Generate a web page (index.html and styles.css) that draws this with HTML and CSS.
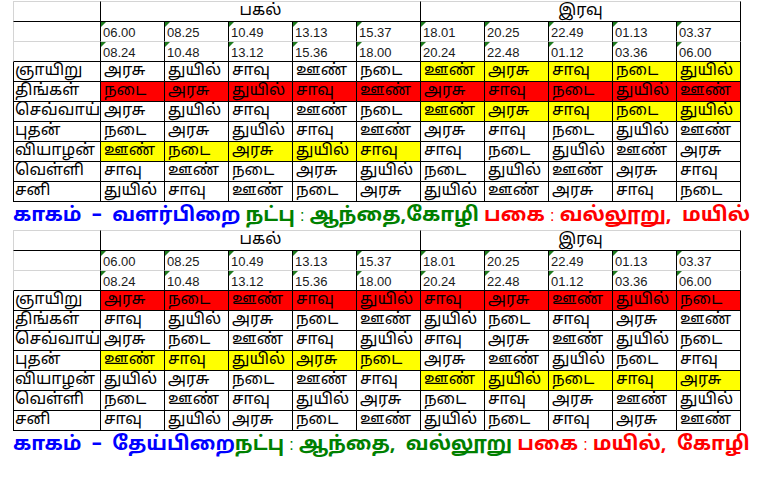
FILE: index.html
```html
<!DOCTYPE html>
<html lang="ta">
<head>
<meta charset="utf-8">
<link rel="stylesheet" href="styles.css">
</head>
<body>
<div class="sheet">
  <div class="grid">
    <div class="c h0 first"></div>
    <div class="c h0 span5 center">பகல்</div>
    <div class="c h0 span5 center">இரவு</div>

    <div class="c t1 first"></div>
    <div class="c t1 tm">06.00</div><div class="c t1 tm">08.25</div><div class="c t1 tm">10.49</div><div class="c t1 tm">13.13</div><div class="c t1 tm">15.37</div>
    <div class="c t1 tm">18.01</div><div class="c t1 tm">20.25</div><div class="c t1 tm">22.49</div><div class="c t1 tm">01.13</div><div class="c t1 tm">03.37</div>
    <div class="c t2 first"></div>
    <div class="c t2 tm">08.24</div><div class="c t2 tm">10.48</div><div class="c t2 tm">13.12</div><div class="c t2 tm">15.36</div><div class="c t2 tm">18.00</div>
    <div class="c t2 tm">20.24</div><div class="c t2 tm">22.48</div><div class="c t2 tm">01.12</div><div class="c t2 tm">03.36</div><div class="c t2 tm">06.00</div>

    <div class="c d first">ஞாயிறு</div>
    <div class="c d">அரசு</div><div class="c d">துயில்</div><div class="c d">சாவு</div><div class="c d">ஊண்</div><div class="c d">நடை</div>
    <div class="c d y">ஊண்</div><div class="c d y">அரசு</div><div class="c d y">சாவு</div><div class="c d y">நடை</div><div class="c d y">துயில்</div>

    <div class="c d first">திங்கள்</div>
    <div class="c d r">நடை</div><div class="c d r">அரசு</div><div class="c d r">துயில்</div><div class="c d r">சாவு</div><div class="c d r">ஊண்</div>
    <div class="c d r">அரசு</div><div class="c d r">சாவு</div><div class="c d r">நடை</div><div class="c d r">துயில்</div><div class="c d r">ஊண்</div>

    <div class="c d first">செவ்வாய்</div>
    <div class="c d">அரசு</div><div class="c d">துயில்</div><div class="c d">சாவு</div><div class="c d">ஊண்</div><div class="c d">நடை</div>
    <div class="c d y">ஊண்</div><div class="c d y">அரசு</div><div class="c d y">சாவு</div><div class="c d y">நடை</div><div class="c d y">துயில்</div>

    <div class="c d first">புதன்</div>
    <div class="c d">நடை</div><div class="c d">அரசு</div><div class="c d">துயில்</div><div class="c d">சாவு</div><div class="c d">ஊண்</div>
    <div class="c d">அரசு</div><div class="c d">சாவு</div><div class="c d">நடை</div><div class="c d">துயில்</div><div class="c d">ஊண்</div>

    <div class="c d first">வியாழன்</div>
    <div class="c d y">ஊண்</div><div class="c d y">நடை</div><div class="c d y">அரசு</div><div class="c d y">துயில்</div><div class="c d y">சாவு</div>
    <div class="c d">சாவு</div><div class="c d">நடை</div><div class="c d">துயில்</div><div class="c d">ஊண்</div><div class="c d">அரசு</div>

    <div class="c d first">வெள்ளி</div>
    <div class="c d">சாவு</div><div class="c d">ஊண்</div><div class="c d">நடை</div><div class="c d">அரசு</div><div class="c d">துயில்</div>
    <div class="c d">நடை</div><div class="c d">துயில்</div><div class="c d">ஊண்</div><div class="c d">அரசு</div><div class="c d">சாவு</div>

    <div class="c d first">சனி</div>
    <div class="c d">துயில்</div><div class="c d">சாவு</div><div class="c d">ஊண்</div><div class="c d">நடை</div><div class="c d">அரசு</div>
    <div class="c d">துயில்</div><div class="c d">ஊண்</div><div class="c d">அரசு</div><div class="c d">சாவு</div><div class="c d">நடை</div>
  </div>

  <div class="title"><span class="blue">காகம்  –  வளர்பிறை </span><span class="green">நட்பு <span class="colon">:</span> ஆந்தை,கோழி</span><span class="red"> பகை <span class="colon">:</span> வல்லூறு,  மயில்</span></div>

  <div class="grid">
    <div class="c h0 first"></div>
    <div class="c h0 span5 center">பகல்</div>
    <div class="c h0 span5 center">இரவு</div>

    <div class="c t1 first"></div>
    <div class="c t1 tm">06.00</div><div class="c t1 tm">08.25</div><div class="c t1 tm">10.49</div><div class="c t1 tm">13.13</div><div class="c t1 tm">15.37</div>
    <div class="c t1 tm">18.01</div><div class="c t1 tm">20.25</div><div class="c t1 tm">22.49</div><div class="c t1 tm">01.13</div><div class="c t1 tm">03.37</div>
    <div class="c t2 first"></div>
    <div class="c t2 tm">08.24</div><div class="c t2 tm">10.48</div><div class="c t2 tm">13.12</div><div class="c t2 tm">15.36</div><div class="c t2 tm">18.00</div>
    <div class="c t2 tm">20.24</div><div class="c t2 tm">22.48</div><div class="c t2 tm">01.12</div><div class="c t2 tm">03.36</div><div class="c t2 tm">06.00</div>

    <div class="c d first">ஞாயிறு</div>
    <div class="c d r">அரசு</div><div class="c d r">நடை</div><div class="c d r">ஊண்</div><div class="c d r">சாவு</div><div class="c d r">துயில்</div>
    <div class="c d r">சாவு</div><div class="c d r">அரசு</div><div class="c d r">ஊண்</div><div class="c d r">துயில்</div><div class="c d r">நடை</div>

    <div class="c d first">திங்கள்</div>
    <div class="c d">சாவு</div><div class="c d">துயில்</div><div class="c d">அரசு</div><div class="c d">நடை</div><div class="c d">ஊண்</div>
    <div class="c d">துயில்</div><div class="c d">நடை</div><div class="c d">சாவு</div><div class="c d">அரசு</div><div class="c d">ஊண்</div>

    <div class="c d first">செவ்வாய்</div>
    <div class="c d">அரசு</div><div class="c d">நடை</div><div class="c d">ஊண்</div><div class="c d">சாவு</div><div class="c d">துயில்</div>
    <div class="c d">சாவு</div><div class="c d">அரசு</div><div class="c d">ஊண்</div><div class="c d">துயில்</div><div class="c d">நடை</div>

    <div class="c d first">புதன்</div>
    <div class="c d y">ஊண்</div><div class="c d y">சாவு</div><div class="c d y">துயில்</div><div class="c d y">அரசு</div><div class="c d y">நடை</div>
    <div class="c d">அரசு</div><div class="c d">ஊண்</div><div class="c d">துயில்</div><div class="c d">நடை</div><div class="c d">சாவு</div>

    <div class="c d first">வியாழன்</div>
    <div class="c d">துயில்</div><div class="c d">அரசு</div><div class="c d">நடை</div><div class="c d">ஊண்</div><div class="c d">சாவு</div>
    <div class="c d y">ஊண்</div><div class="c d y">துயில்</div><div class="c d y">நடை</div><div class="c d y">சாவு</div><div class="c d y">அரசு</div>

    <div class="c d first">வெள்ளி</div>
    <div class="c d">நடை</div><div class="c d">ஊண்</div><div class="c d">சாவு</div><div class="c d">துயில்</div><div class="c d">அரசு</div>
    <div class="c d">நடை</div><div class="c d">சாவு</div><div class="c d">அரசு</div><div class="c d">ஊண்</div><div class="c d">துயில்</div>

    <div class="c d first">சனி</div>
    <div class="c d">சாவு</div><div class="c d">துயில்</div><div class="c d">அரசு</div><div class="c d">நடை</div><div class="c d">ஊண்</div>
    <div class="c d">துயில்</div><div class="c d">நடை</div><div class="c d">சாவு</div><div class="c d">அரசு</div><div class="c d">ஊண்</div>
  </div>

  <div class="title"><span class="blue">காகம்  –  தேய்பிறை</span><span class="green">நட்பு <span class="colon">:</span> ஆந்தை,  வல்லூறு</span><span class="red"> பகை <span class="colon">:</span> மயில்,  கோழி</span></div>
</div>
</body>
</html>
```

FILE: styles.css
```css
html, body {
  margin: 0;
  padding: 0;
  background: #ffffff;
}

.sheet {
  padding: 1px 0 0 13px;
  font-family: "Latha", "Noto Sans Tamil", "Noto Serif Tamil", "Lohit Tamil", "FreeSans", "Noto Sans", sans-serif;
  color: #000;
}

.grid {
  display: grid;
  grid-template-columns: 88px repeat(10, 64px);
  grid-template-rows: 21px repeat(9, 20px);
  width: 728px;
}

.c {
  box-sizing: border-box;
  position: relative;
  border-right: 1px solid #000;
  border-bottom: 1px solid #000;
  font-size: 16px;
  line-height: 19px;
  padding-left: 3px;
  white-space: nowrap;
  overflow: hidden;
}

.first {
  border-left: 1px solid #000;
  padding-left: 1px;
}

.h0 {
  border-top: 1px solid #d4d4d4;
}

.h0.first, .t1.first, .t2.first {
  border-left-color: #d4d4d4;
}

.span5 {
  grid-column: span 5;
}

.center {
  text-align: center;
  padding-left: 0;
}

.t1 {
  border-bottom-color: #d4d4d4;
}

.tm {
  font-family: "Liberation Sans", Arial, sans-serif;
  font-size: 13px;
  line-height: 20px;
  padding-top: 1px;
  padding-left: 2px;
  color: #1a1a1a;
}

.tm::before {
  content: "";
  position: absolute;
  left: 0;
  top: 0;
  border-top: 5px solid #1e7b1e;
  border-right: 5px solid transparent;
}

.y { background: #ffff00; }
.r { background: #ff0000; }

.title {
  height: 28px;
  font-size: 20px;
  font-weight: bold;
  line-height: 28px;
  white-space: pre;
  padding-top: 0;
}

.title + .grid { margin-top: 0; }

.blue { color: #0000ff; }
.green { color: #008000; }
.red { color: #ff0000; }

.colon {
  font-family: "Liberation Sans", Arial, sans-serif;
  font-weight: normal;
  font-size: 16px;
}
```
